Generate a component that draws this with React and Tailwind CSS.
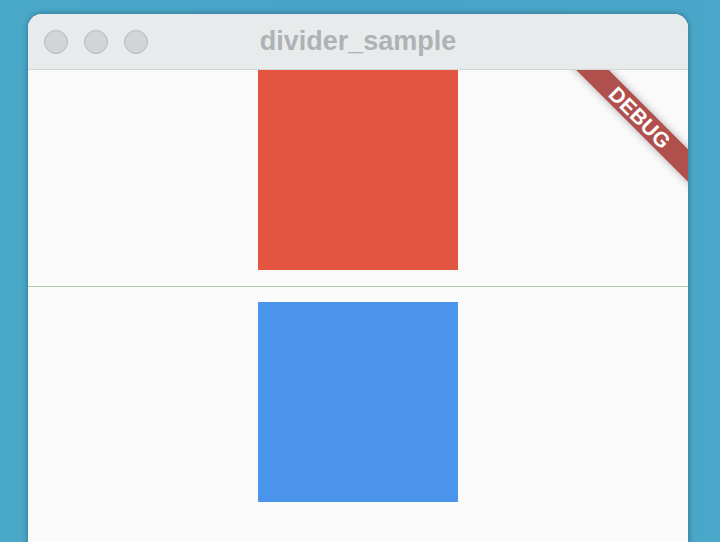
export default function App() {
  return (
    <div className="h-[542px] w-[720px] overflow-hidden bg-gradient-to-r from-[#4aa8c9] via-[#48a3c8] to-[#4aa7c9] pt-[14px] pl-[28px]">
      {/* window */}
      <div className="flex h-[560px] w-[660px] flex-col overflow-hidden rounded-t-[14px] bg-[#fafafa] shadow-[0_0_6px_rgba(0,0,0,0.35)]">
        {/* title bar */}
        <div className="relative flex h-[56px] shrink-0 items-center border-b border-[#d3d6d7] bg-[#e8ebec] pl-[16px]">
          <div className="flex gap-[16px]">
            <span className="h-[24px] w-[24px] rounded-full border border-[#b9bcbd] bg-[#d1d5d6]" />
            <span className="h-[24px] w-[24px] rounded-full border border-[#b9bcbd] bg-[#d1d5d6]" />
            <span className="h-[24px] w-[24px] rounded-full border border-[#b9bcbd] bg-[#d1d5d6]" />
          </div>
          <div className="absolute inset-0 flex items-center justify-center font-['Liberation_Sans',Arial,sans-serif] text-[27px] font-bold text-[#afb2b4]">
            divider_sample
          </div>
        </div>

        {/* content */}
        <div className="relative flex flex-1 flex-col items-center overflow-hidden">
          <div className="h-[200px] w-[200px] shrink-0 bg-[#e35441]" />
          <div className="flex h-[32px] w-full shrink-0 items-center">
            <div className="h-px w-full bg-[#a9d0a2]" />
          </div>
          <div className="h-[200px] w-[200px] shrink-0 bg-[#4a94ec]" />

          {/* debug banner */}
          <div className="absolute left-[512px] top-[36px] flex h-[23px] w-[200px] rotate-45 items-center justify-center bg-[#b0504d] shadow-[0_0_8px_rgba(0,0,0,0.3)]">
            <span className="font-['Liberation_Sans',Arial,sans-serif] text-[21px] font-black leading-none tracking-[0.3px] text-white">
              DEBUG
            </span>
          </div>
        </div>
      </div>
    </div>
  );
}
